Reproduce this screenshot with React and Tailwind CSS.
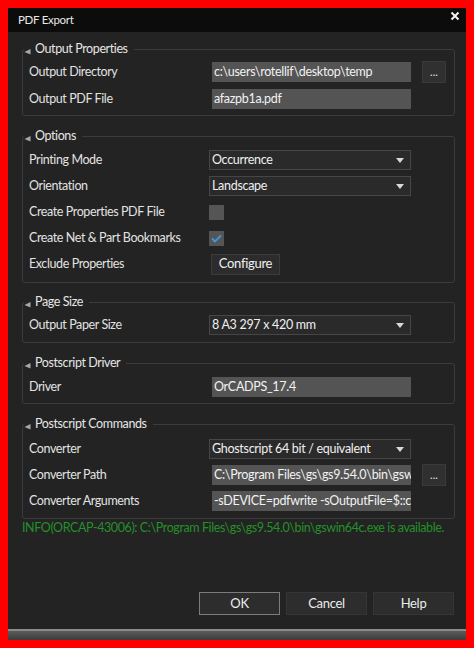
import React from "react";

const font = { fontFamily: 'Lato, "Noto Sans", sans-serif' };

function Tri() {
  return (
    <svg width="7" height="7" viewBox="0 0 7 7" className="inline-block mr-[4px] mt-[4px]">
      <polygon points="0.5,4 6.5,1 6.5,6.5" fill="#a8a8a8" />
    </svg>
  );
}

function Group({ title, className = "", children }) {
  return (
    <fieldset className={"ml-[14px] mr-[11px] border border-[#3b3b3b] rounded-[3px] px-[6px] pt-0 pb-0 " + className}>
      <legend className="ml-[-5px] pl-0 pr-[6px] flex items-center leading-[16px] text-[12.5px] tracking-[-0.4px] text-[#e6e6e6]">
        <Tri />
        <span>{title}</span>
      </legend>
      {children}
    </fieldset>
  );
}

function Row({ label, h = "h-[26px]", children }) {
  return (
    <div className={"flex items-center " + h}>
      <div className="w-[180px] shrink-0 text-[12.5px] tracking-[-0.4px] text-[#e2e2e2] leading-[16px]">{label}</div>
      {children}
    </div>
  );
}

function Input({ value }) {
  return (
    <div className="ml-[3px] w-[199px] h-[20px] bg-[#545454] text-[#f2f2f2] text-[12.5px] tracking-[-0.3px] leading-[20px] pl-[2px] whitespace-nowrap overflow-hidden">
      {value}
    </div>
  );
}

function Select({ value }) {
  return (
    <div className="w-[202px] h-[20px] bg-[#2a2a2a] border border-[#464646] flex items-center justify-between pl-[2px] pr-[6px] text-[12.5px] tracking-[-0.3px] text-[#f0f0f0]">
      <span className="leading-[18px] whitespace-nowrap">{value}</span>
      <svg width="8" height="5" viewBox="0 0 8 5">
        <polygon points="0,0 8,0 4,5" fill="#d8d8d8" />
      </svg>
    </div>
  );
}

function Dots() {
  return (
    <div className="ml-[11px] w-[24px] h-[22px] bg-[#303030] border border-[#3a3a3a] text-[#e0e0e0] text-[11px] flex items-center justify-center leading-none pb-[2px]">
      ...
    </div>
  );
}

function Check({ checked }) {
  return (
    <div className="w-[15px] h-[15px] bg-[#555555] flex items-center justify-center">
      {checked && (
        <svg width="11" height="9" viewBox="0 0 11 9">
          <polyline points="1,4.5 4,7.5 10,1.5" fill="none" stroke="#3a98e0" strokeWidth="1.8" />
        </svg>
      )}
    </div>
  );
}

function Btn({ children, primary }) {
  return (
    <div
      className={
        "w-[81px] h-[23px] flex items-center justify-center text-[13px] tracking-[-0.3px] text-[#ececec] bg-[#2d2d2d] border " +
        (primary ? "border-[#7c7c7c]" : "border-[#353535]")
      }
    >
      {children}
    </div>
  );
}

export default function App() {
  return (
    <div className="w-[474px] h-[648px] bg-[#ff0000] p-[8px]" style={font}>
      <div className="w-[458px] h-[632px] flex flex-col bg-[#232323]">
        <div className="h-[24px] shrink-0 bg-[#0c0c0c] flex items-center justify-between pl-[10px] pr-[6px]">
          <span className="text-[11.5px] tracking-[-0.3px] text-[#e8e8e8] leading-none">PDF Export</span>
          <svg width="10" height="10" viewBox="0 0 10 10" className="mb-[8px]">
            <path d="M1.5 1.5 L8.5 8.5 M8.5 1.5 L1.5 8.5" stroke="#f4f4f4" strokeWidth="2" />
          </svg>
        </div>

        <Group title="Output Properties" className="mt-[9px]">
          <div className="pt-[4px] pb-[6px] flex flex-col gap-[6px]">
            <Row label="Output Directory" h="h-[22px]">
              <Input value="c:\users\rotellif\desktop\temp" />
              <Dots />
            </Row>
            <Row label="Output PDF File" h="h-[20px]">
              <Input value="afazpb1a.pdf" />
            </Row>
          </div>
        </Group>

        <Group title="Options" className="mt-[12px]">
          <div className="pt-[3px] pb-[5px]">
            <Row label="Printing Mode">
              <Select value="Occurrence" />
            </Row>
            <Row label="Orientation">
              <Select value="Landscape" />
            </Row>
            <Row label="Create Properties PDF File">
              <Check />
            </Row>
            <Row label="Create Net & Part Bookmarks">
              <Check checked />
            </Row>
            <Row label="Exclude Properties">
              <div className="ml-[2px] w-[69px] h-[21px] bg-[#2c2c2c] border border-[#3c3c3c] flex items-center justify-center text-[13px] tracking-[-0.3px] text-[#f0f0f0]">
                Configure
              </div>
            </Row>
          </div>
        </Group>

        <Group title="Page Size" className="mt-[11px]">
          <div className="pt-[2px] pb-[4px]">
            <Row label="Output Paper Size">
              <Select value="8 A3 297 x 420 mm" />
            </Row>
          </div>
        </Group>

        <Group title="Postscript Driver" className="mt-[12px]">
          <div className="pt-[3px] pb-[3px]">
            <Row label="Driver">
              <Input value="OrCADPS_17.4" />
            </Row>
          </div>
        </Group>

        <Group title="Postscript Commands" className="mt-[12px]">
          <div className="pt-[4px] pb-[4px]">
            <Row label="Converter">
              <Select value="Ghostscript 64 bit / equivalent" />
            </Row>
            <Row label="Converter Path">
              <Input value="C:\Program Files\gs\gs9.54.0\bin\gswin64c.exe" />
              <Dots />
            </Row>
            <Row label="Converter Arguments">
              <Input value="-sDEVICE=pdfwrite -sOutputFile=$::capPdfUtil" />
            </Row>
          </div>
        </Group>

        <div className="ml-[14px] mt-[1px] text-[12.5px] tracking-[-0.4px] leading-[16px] text-[#23902a] whitespace-nowrap">
          INFO(ORCAP-43006): C:\Program Files\gs\gs9.54.0\bin\gswin64c.exe is available.
        </div>

        <div className="mt-auto mb-[14px] flex justify-end gap-[6px] pr-[12px]">
          <Btn primary>OK</Btn>
          <Btn>Cancel</Btn>
          <Btn>Help</Btn>
        </div>

        <div className="h-[2px] shrink-0 bg-[#8a8a8a]" />
        <div className="h-[9px] shrink-0 bg-gradient-to-b from-[#5c5c5c] to-[#3c3c3c]" />
      </div>
    </div>
  );
}
